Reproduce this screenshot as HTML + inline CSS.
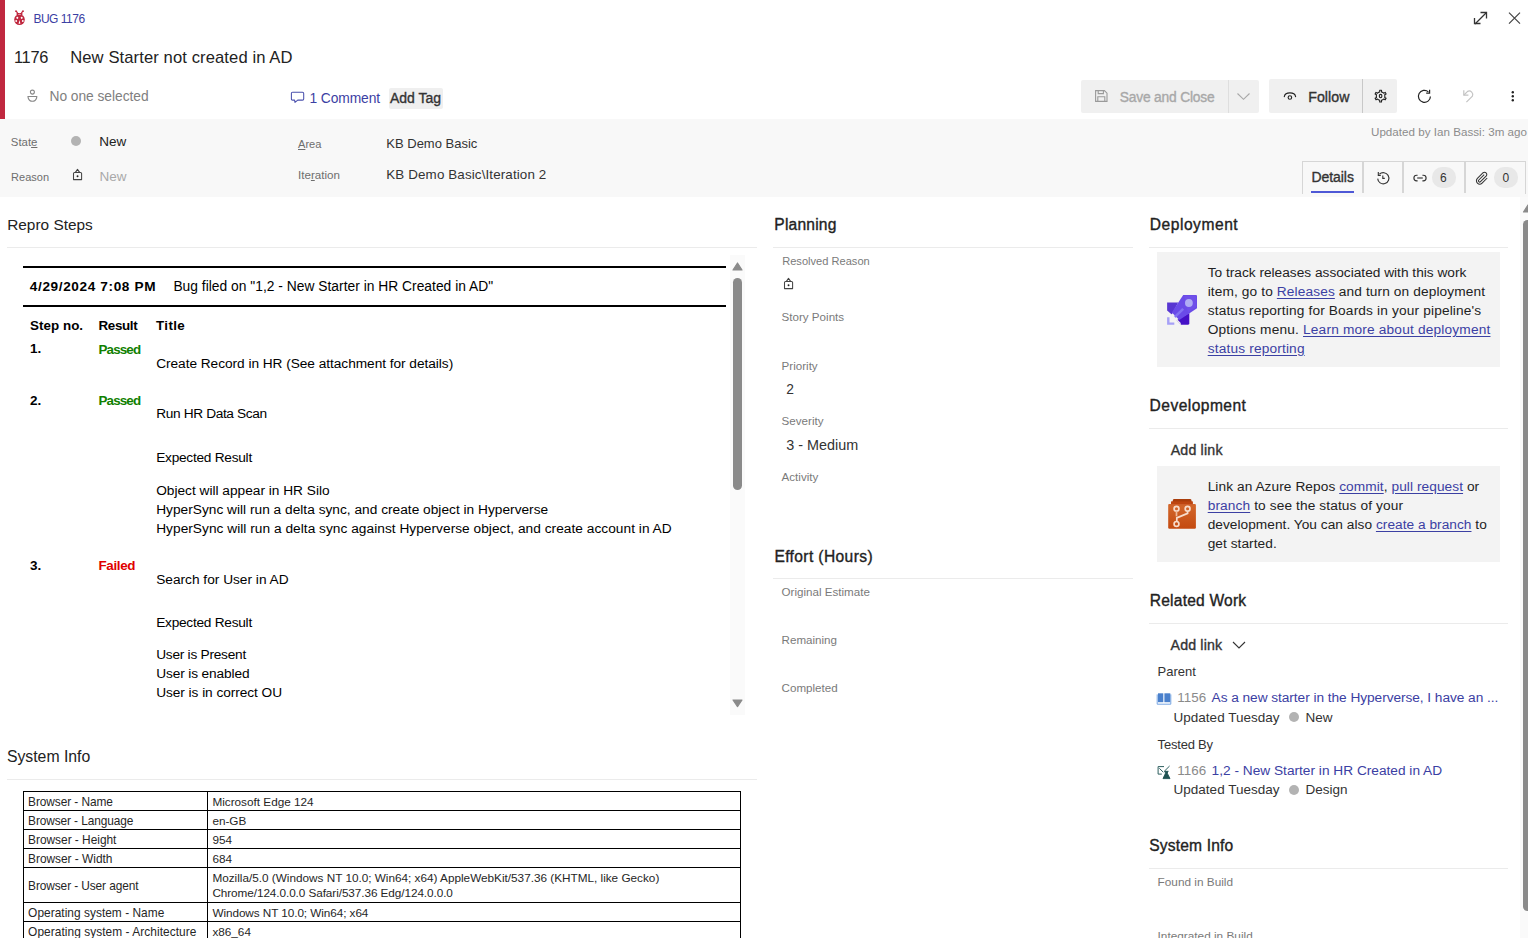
<!DOCTYPE html>
<html><head><meta charset="utf-8"><title>Bug 1176</title>
<style>
html,body{margin:0;padding:0;width:1528px;height:938px;overflow:hidden;background:#fff;}
body{position:relative;font-family:"Liberation Sans", sans-serif;}
.t{position:absolute;white-space:pre;}
.r{position:absolute;display:block;}
u{text-decoration:underline;text-underline-offset:1px;}
</style></head><body>
<div class="r" style="left:0px;top:0px;width:5px;height:119px;background:#c0283f;"></div>
<svg class="r" style="left:13px;top:10px" width="13" height="16" viewBox="0 0 13 16"><g fill="#c0283f">
<path d="M3.2 1.2 L4.6 3.2 M9.8 1.2 L8.4 3.2" stroke="#c0283f" stroke-width="1.2"/>
<circle cx="3" cy="1.2" r="0.9"/><circle cx="10" cy="1.2" r="0.9"/>
<path d="M3.6 3 H9.4 V5 H3.6 Z"/>
<ellipse cx="6.5" cy="9.6" rx="5.3" ry="5.4"/>
</g>
<g fill="#fff"><ellipse cx="4.3" cy="7.8" rx="1" ry="1.1"/><ellipse cx="8.7" cy="7.8" rx="1" ry="1.1"/>
<ellipse cx="3.2" cy="11" rx="0.9" ry="1"/><ellipse cx="9.8" cy="11" rx="0.9" ry="1"/>
<path d="M6.5 10 L7.4 13.8 H5.6 Z"/><path d="M5 4.2 Q6.5 3.4 8 4.2 V4.6 H5 Z"/></g></svg>
<div class="t" style="left:33.4px;top:11.00px;font-size:12px;line-height:16px;color:#3b40a3;letter-spacing:-0.494px;">BUG 1176</div>
<svg class="r" style="left:1472px;top:10px" width="17" height="16" viewBox="0 0 17 16"><g fill="none" stroke="#333" stroke-width="1.3"><path d="M3 14 L14.5 2.5"/><path d="M8.5 2.5 H14.5 V8.5" stroke-width="1.3"/><path d="M2.5 8 V13.5 H8.5"/></g></svg>
<svg class="r" style="left:1507px;top:11px" width="15" height="14" viewBox="0 0 15 14"><g fill="none" stroke="#444" stroke-width="1.2"><path d="M2 1.7 L13 12.7 M13 1.7 L2 12.7"/></g></svg>
<div class="t" style="left:14px;top:46.00px;font-size:16.4px;line-height:22px;color:#222;letter-spacing:-0.317px;">1176</div>
<div class="t" style="left:70.2px;top:46.50px;font-size:16.6px;line-height:22px;color:#222;letter-spacing:0.099px;">New Starter not created in AD</div>
<svg class="r" style="left:26px;top:89px" width="13" height="14" viewBox="0 0 13 14"><g fill="none" stroke="#888" stroke-width="1.1"><circle cx="6.4" cy="3.1" r="2.0"/><path d="M1.9 7.5 H10.9 L10.6 9 Q9.6 12.3 6.4 12.3 Q3.2 12.3 2.2 9 Z" stroke-linejoin="round"/></g></svg>
<div class="t" style="left:49.5px;top:87.50px;font-size:13.8px;line-height:18px;color:#808080;letter-spacing:-0.044px;">No one selected</div>
<svg class="r" style="left:290px;top:91px" width="15" height="13" viewBox="0 0 15 13"><path d="M2.6 1.2 H12.5 Q13.7 1.2 13.7 2.4 V7.9 Q13.7 9.1 12.5 9.1 H7.7 L5 11.4 L4.6 9.1 H2.6 Q1.4 9.1 1.4 7.9 V2.4 Q1.4 1.2 2.6 1.2 Z" fill="none" stroke="#4a50ad" stroke-width="1.05" stroke-linejoin="round"/></svg>
<div class="t" style="left:309.4px;top:89.50px;font-size:13.8px;line-height:18px;color:#3b40a3;letter-spacing:-0.077px;">1 Comment</div>
<div class="r" style="left:389px;top:88px;width:54px;height:21px;background:#efefef;border-radius:2px"></div>
<div class="t" style="left:390px;top:89.00px;font-size:14px;line-height:19px;color:#333;-webkit-text-stroke:0.35px #333;letter-spacing:-0.021px;">Add Tag</div>
<div class="r" style="left:1081px;top:80px;width:178px;height:33px;background:#f0f0f0;border-radius:2px"></div>
<div class="r" style="left:1228px;top:80px;width:1px;height:33px;background:#dedede;"></div>
<svg class="r" style="left:1094px;top:89px" width="15" height="14" viewBox="0 0 15 14"><g fill="none" stroke="#9a9a9a" stroke-width="1.1"><path d="M1.6 1.6 H10.4 L13 4.2 V12.4 H1.6 Z"/><path d="M4.2 1.6 V4.6 H9.4 V1.6"/><path d="M3.8 12.4 V7.8 H10.8 V12.4"/></g></svg>
<div class="t" style="left:1119.7px;top:88.50px;font-size:13.8px;line-height:18px;color:#a8a8a8;-webkit-text-stroke:0.35px #a8a8a8;letter-spacing:-0.186px;">Save and Close</div>
<svg class="r" style="left:1236px;top:92px" width="15" height="9" viewBox="0 0 15 9"><path d="M1.5 1.5 L7.5 7.3 L13.5 1.5" fill="none" stroke="#a8a8a8" stroke-width="1.1"/></svg>
<div class="r" style="left:1269px;top:79px;width:128px;height:34px;background:#f0f0f0;border-radius:2px"></div>
<div class="r" style="left:1362px;top:79px;width:1px;height:34px;background:#c8c8c8;"></div>
<svg class="r" style="left:1282px;top:90px" width="16" height="12" viewBox="0 0 16 12"><g fill="none" stroke="#222" stroke-width="1.15"><path d="M2.3 6.6 A5.7 4.3 0 0 1 13.6 6.6" stroke-linecap="round"/><circle cx="7.9" cy="7.5" r="1.75"/></g></svg>
<div class="t" style="left:1308.2px;top:87.80px;font-size:14.2px;line-height:19px;color:#333;-webkit-text-stroke:0.35px #333;letter-spacing:0.060px;">Follow</div>
<svg class="r" style="left:1373px;top:89px" width="15" height="15" viewBox="0 0 15 15"><g fill="none" stroke="#222" stroke-width="1.1" stroke-linejoin="round"><path d="M5.45 3.38 L6.71 2.89 L6.68 1.27 L8.52 1.27 L8.49 2.89 L9.75 3.38 L10.80 4.22 L12.19 3.39 L13.11 4.99 L11.69 5.77 L11.90 7.10 L11.69 8.43 L13.11 9.21 L12.19 10.81 L10.80 9.98 L9.75 10.82 L8.49 11.31 L8.52 12.93 L6.68 12.93 L6.71 11.31 L5.45 10.82 L4.40 9.98 L3.01 10.81 L2.09 9.21 L3.51 8.43 L3.30 7.10 L3.51 5.77 L2.09 4.99 L3.01 3.39 L4.40 4.22 Z"/><ellipse cx="7.6" cy="7.1" rx="1.3" ry="1.7"/></g></svg>
<svg class="r" style="left:1417.3px;top:89.2px" width="16" height="15" viewBox="0 0 16 15"><g fill="none" stroke="#222" stroke-width="1.2"><path d="M13.4 7.4 A6 6 0 1 1 11.4 2.9"/><path d="M12.6 0.8 V4.1 H9.2"/></g></svg>
<svg class="r" style="left:1461px;top:89px" width="16" height="15" viewBox="0 0 16 15"><g fill="none" stroke="#c4c4c4" stroke-width="1.2"><path d="M2.8 1.2 V6.2 H7.4"/><path d="M3 6 L6.6 2.4 A3.6 3.6 0 0 1 11.4 7.2 L5.4 13.2"/></g></svg>
<svg class="r" style="left:1509px;top:89px" width="8" height="15" viewBox="0 0 8 15"><g fill="#222"><circle cx="3.8" cy="3.3" r="1.2"/><circle cx="3.8" cy="7.3" r="1.2"/><circle cx="3.8" cy="11.3" r="1.2"/></g></svg>
<div class="r" style="left:0px;top:119px;width:1528px;height:78px;background:#f8f8f8;"></div>
<div class="t" style="left:10.8px;top:134.50px;font-size:11.4px;line-height:15px;color:#6e6e6e;">Stat<u>e</u></div>
<svg class="r" style="left:70px;top:135px" width="12" height="12" viewBox="0 0 12 12"><circle cx="6" cy="6" r="5" fill="#b3b3b3"/></svg>
<div class="t" style="left:99.3px;top:132.50px;font-size:13.5px;line-height:18px;color:#222;">New</div>
<div class="t" style="left:11.1px;top:169.50px;font-size:11px;line-height:15px;color:#6e6e6e;">Reason</div>
<svg class="r" style="left:71px;top:168px" width="13" height="13" viewBox="0 0 13 13"><g fill="none" stroke="#444" stroke-width="1.05" stroke-linejoin="round"><path d="M2.5 11.6 V5.6 Q2.5 4.5 3.6 4.5 H9.5 Q10.6 4.5 10.6 5.6 V11.6 Z"/><path d="M4.4 4.4 L6.5 1.4 L8.6 4.4"/></g><circle cx="6.55" cy="8.3" r="0.95" fill="#222"/></svg>
<div class="t" style="left:99.6px;top:167.50px;font-size:13.5px;line-height:18px;color:#a9a9a9;">New</div>
<div class="t" style="left:298px;top:136.80px;font-size:11.1px;line-height:15px;color:#6e6e6e;"><u>A</u>rea</div>
<div class="t" style="left:386.3px;top:135.30px;font-size:13px;line-height:17px;color:#333;">KB Demo Basic</div>
<div class="t" style="left:298px;top:167.00px;font-size:11.6px;line-height:16px;color:#6e6e6e;">Ite<u>r</u>ation</div>
<div class="t" style="left:386.3px;top:165.50px;font-size:13.4px;line-height:18px;color:#333;letter-spacing:0.123px;">KB Demo Basic\Iteration 2</div>
<div class="t" style="left:1371px;top:124.30px;font-size:11.6px;line-height:16px;color:#8c8c8c;letter-spacing:0.025px;">Updated by Ian Bassi: 3m ago</div>
<div class="r" style="left:1302px;top:161px;width:222px;height:32px;border:1.5px solid #d6d6d6;border-bottom:none"></div>
<div class="r" style="left:1362px;top:161px;width:2px;height:32px;background:#d6d6d6;"></div>
<div class="r" style="left:1402px;top:161px;width:2px;height:32px;background:#d6d6d6;"></div>
<div class="r" style="left:1464px;top:161px;width:2px;height:32px;background:#d6d6d6;"></div>
<div class="t" style="left:1311.5px;top:168.40px;font-size:14px;line-height:19px;color:#333;-webkit-text-stroke:0.35px #333;letter-spacing:-0.066px;">Details</div>
<div class="r" style="left:1311px;top:191px;width:43px;height:2px;background:#4e58d6;"></div>
<svg class="r" style="left:1375px;top:170px" width="16" height="16" viewBox="0 0 16 16"><g fill="none" stroke="#333" stroke-width="1.1"><path d="M2.7 8.6 A5.6 5.6 0 1 0 4.4 4.2"/><path d="M3.3 2.1 V5.4 H5.8"/><path d="M7.8 5.4 V8.4 H9.8"/></g></svg>
<svg class="r" style="left:1412px;top:172px" width="16" height="12" viewBox="0 0 16 12"><g fill="none" stroke="#333" stroke-width="1.15"><path d="M5.6 3.2 H4.7 A2.8 2.8 0 0 0 4.7 8.8 H5.6"/><path d="M10.4 3.2 H11.3 A2.8 2.8 0 0 1 11.3 8.8 H10.4"/><path d="M5.2 6 H10.8"/></g></svg>
<div class="r" style="left:1432px;top:167px;width:24px;height:20.5px;background:#e8e8e8;border-radius:10px"></div>
<div class="t" style="left:1440px;top:170.00px;font-size:12px;line-height:16px;color:#333;">6</div>
<svg class="r" style="left:1475px;top:171px" width="14" height="14" viewBox="0 0 14 14"><path d="M9.2 3.6 L3.8 9 A1.2 1.2 0 0 0 5.5 10.7 L11.3 4.9 A2.3 2.3 0 0 0 8.1 1.7 L2.4 7.4 A3.3 3.3 0 0 0 7.1 12.1 L12.2 7" fill="none" stroke="#333" stroke-width="1.05"/></svg>
<div class="r" style="left:1494px;top:167px;width:24px;height:20.5px;background:#e8e8e8;border-radius:10px"></div>
<div class="t" style="left:1502.5px;top:170.00px;font-size:12px;line-height:16px;color:#333;">0</div>
<div class="t" style="left:7.2px;top:214.30px;font-size:15.4px;line-height:21px;color:#222;">Repro Steps</div>
<div class="r" style="left:7px;top:247px;width:750px;height:1px;background:#ebebeb;"></div>
<div class="r" style="left:23px;top:266px;width:703px;height:2px;background:#000;"></div>
<div class="r" style="left:23px;top:305px;width:703px;height:2px;background:#000;"></div>
<div class="t" style="left:29.8px;top:278.30px;font-size:13.6px;line-height:18px;color:#000;font-weight:700;letter-spacing:0.629px;">4/29/2024 7:08 PM</div>
<div class="t" style="left:173.4px;top:278.30px;font-size:13.8px;line-height:18px;color:#000;letter-spacing:0.017px;">Bug filed on "1,2 - New Starter in HR Created in AD"</div>
<div class="t" style="left:29.9px;top:317.30px;font-size:13.4px;line-height:18px;color:#000;font-weight:700;letter-spacing:0.053px;">Step no.</div>
<div class="t" style="left:98.5px;top:317.30px;font-size:13.4px;line-height:18px;color:#000;font-weight:700;letter-spacing:-0.347px;">Result</div>
<div class="t" style="left:156.1px;top:317.30px;font-size:13.4px;line-height:18px;color:#000;font-weight:700;letter-spacing:0.326px;">Title</div>
<div class="t" style="left:29.9px;top:340.30px;font-size:13.5px;line-height:18px;color:#000;font-weight:700;">1.</div>
<div class="t" style="left:98.5px;top:340.90px;font-size:13.4px;line-height:18px;color:#108000;font-weight:700;letter-spacing:-0.861px;">Passed</div>
<div class="t" style="left:156.2px;top:354.50px;font-size:13.7px;line-height:18px;color:#000;letter-spacing:-0.042px;">Create Record in HR (See attachment for details)</div>
<div class="t" style="left:29.9px;top:391.50px;font-size:13.5px;line-height:18px;color:#000;font-weight:700;">2.</div>
<div class="t" style="left:98.5px;top:391.90px;font-size:13.4px;line-height:18px;color:#108000;font-weight:700;letter-spacing:-0.861px;">Passed</div>
<div class="t" style="left:156.2px;top:405.20px;font-size:13.7px;line-height:18px;color:#000;letter-spacing:-0.360px;">Run HR Data Scan</div>
<div class="t" style="left:156.2px;top:448.80px;font-size:13.7px;line-height:18px;color:#000;letter-spacing:-0.262px;">Expected Result</div>
<div class="t" style="left:156.2px;top:481.50px;font-size:13.7px;line-height:18px;color:#000;">Object will appear in HR Silo</div>
<div class="t" style="left:156.2px;top:500.50px;font-size:13.7px;line-height:18px;color:#000;letter-spacing:0.015px;">HyperSync will run a delta sync, and create object in Hyperverse</div>
<div class="t" style="left:156.2px;top:519.50px;font-size:13.7px;line-height:18px;color:#000;letter-spacing:0.033px;">HyperSync will run a delta sync against Hyperverse object, and create account in AD</div>
<div class="t" style="left:29.9px;top:556.50px;font-size:13.5px;line-height:18px;color:#000;font-weight:700;">3.</div>
<div class="t" style="left:98.5px;top:556.50px;font-size:13.4px;line-height:18px;color:#e00000;font-weight:700;letter-spacing:-0.341px;">Failed</div>
<div class="t" style="left:156.2px;top:570.70px;font-size:13.7px;line-height:18px;color:#000;">Search for User in AD</div>
<div class="t" style="left:156.2px;top:613.80px;font-size:13.7px;line-height:18px;color:#000;letter-spacing:-0.262px;">Expected Result</div>
<div class="t" style="left:156.2px;top:646.30px;font-size:13.7px;line-height:18px;color:#000;letter-spacing:-0.254px;">User is Present</div>
<div class="t" style="left:156.2px;top:665.30px;font-size:13.7px;line-height:18px;color:#000;letter-spacing:-0.122px;">User is enabled</div>
<div class="t" style="left:156.2px;top:684.40px;font-size:13.7px;line-height:18px;color:#000;letter-spacing:-0.056px;">User is in correct OU</div>
<div class="r" style="left:730px;top:255px;width:15px;height:460px;background:#fafafa;"></div>
<svg class="r" style="left:731px;top:261px" width="13" height="11" viewBox="0 0 13 11"><path d="M6.5 2 L11 9 H2 Z" fill="#8a8a8a" stroke="#8a8a8a" stroke-width="1.2" stroke-linejoin="round"/></svg>
<div class="r" style="left:733px;top:277.5px;width:9px;height:212.0px;background:#8a8a8a;border-radius:4.5px"></div>
<svg class="r" style="left:731px;top:698px" width="13" height="11" viewBox="0 0 13 11"><path d="M2 2 H11 L6.5 8.6 Z" fill="#8a8a8a" stroke="#8a8a8a" stroke-width="1.2" stroke-linejoin="round"/></svg>
<div class="t" style="left:6.9px;top:746.00px;font-size:15.8px;line-height:21px;color:#222;">System Info</div>
<div class="r" style="left:7px;top:779px;width:750px;height:1px;background:#ebebeb;"></div>
<div class="r" style="left:23px;top:791px;width:1px;height:147px;background:#000;"></div>
<div class="r" style="left:740px;top:791px;width:1px;height:147px;background:#000;"></div>
<div class="r" style="left:207px;top:791px;width:1px;height:147px;background:#000;"></div>
<div class="r" style="left:23px;top:791px;width:718px;height:1px;background:#000;"></div>
<div class="t" style="left:28.1px;top:794.00px;font-size:11.9px;line-height:16px;color:#262626;letter-spacing:-0.085px;">Browser - Name</div>
<div class="t" style="left:212.4px;top:793.50px;font-size:11.75px;line-height:16px;color:#262626;">Microsoft Edge 124</div>
<div class="r" style="left:23px;top:810px;width:718px;height:1px;background:#000;"></div>
<div class="t" style="left:28.1px;top:813.00px;font-size:11.9px;line-height:16px;color:#262626;letter-spacing:-0.111px;">Browser - Language</div>
<div class="t" style="left:212.4px;top:812.50px;font-size:11.75px;line-height:16px;color:#262626;">en-GB</div>
<div class="r" style="left:23px;top:829px;width:718px;height:1px;background:#000;"></div>
<div class="t" style="left:28.1px;top:832.00px;font-size:11.9px;line-height:16px;color:#262626;letter-spacing:-0.018px;">Browser - Height</div>
<div class="t" style="left:212.4px;top:831.50px;font-size:11.75px;line-height:16px;color:#262626;">954</div>
<div class="r" style="left:23px;top:848px;width:718px;height:1px;background:#000;"></div>
<div class="t" style="left:28.1px;top:851.00px;font-size:11.9px;line-height:16px;color:#262626;letter-spacing:-0.020px;">Browser - Width</div>
<div class="t" style="left:212.4px;top:850.50px;font-size:11.75px;line-height:16px;color:#262626;">684</div>
<div class="r" style="left:23px;top:867px;width:718px;height:1px;background:#000;"></div>
<div class="t" style="left:28.1px;top:878.00px;font-size:11.9px;line-height:16px;color:#262626;letter-spacing:-0.102px;">Browser - User agent</div>
<div class="t" style="left:212.4px;top:869.70px;font-size:11.75px;line-height:16px;color:#262626;">Mozilla/5.0 (Windows NT 10.0; Win64; x64) AppleWebKit/537.36 (KHTML, like Gecko)</div>
<div class="t" style="left:212.4px;top:885.30px;font-size:11.75px;line-height:16px;color:#262626;letter-spacing:-0.074px;">Chrome/124.0.0.0 Safari/537.36 Edg/124.0.0.0</div>
<div class="r" style="left:23px;top:902px;width:718px;height:1px;background:#000;"></div>
<div class="t" style="left:28.1px;top:905.00px;font-size:11.9px;line-height:16px;color:#262626;letter-spacing:0.033px;">Operating system - Name</div>
<div class="t" style="left:212.4px;top:904.50px;font-size:11.75px;line-height:16px;color:#262626;letter-spacing:-0.070px;">Windows NT 10.0; Win64; x64</div>
<div class="r" style="left:23px;top:921px;width:718px;height:1px;background:#000;"></div>
<div class="t" style="left:28.1px;top:924.00px;font-size:11.9px;line-height:16px;color:#262626;letter-spacing:0.058px;">Operating system - Architecture</div>
<div class="t" style="left:212.4px;top:923.50px;font-size:11.75px;line-height:16px;color:#262626;">x86_64</div>
<div class="t" style="left:774.3px;top:214.00px;font-size:15.6px;line-height:21px;color:#222;-webkit-text-stroke:0.35px #222;letter-spacing:0.200px;">Planning</div>
<div class="r" style="left:773px;top:247px;width:360px;height:1px;background:#ebebeb;"></div>
<div class="t" style="left:782.2px;top:253.70px;font-size:11.1px;line-height:15px;color:#7a7a7a;">Resolved Reason</div>
<svg class="r" style="left:781.6px;top:277.3px" width="13" height="13" viewBox="0 0 13 13"><g fill="none" stroke="#444" stroke-width="1.05" stroke-linejoin="round"><path d="M2.5 11.6 V5.6 Q2.5 4.5 3.6 4.5 H9.5 Q10.6 4.5 10.6 5.6 V11.6 Z"/><path d="M4.4 4.4 L6.5 1.4 L8.6 4.4"/></g><circle cx="6.55" cy="8.3" r="0.95" fill="#222"/></svg>
<div class="t" style="left:781.6px;top:309.10px;font-size:11.6px;line-height:16px;color:#7a7a7a;">Story Points</div>
<div class="t" style="left:781.6px;top:357.50px;font-size:11.6px;line-height:16px;color:#7a7a7a;">Priority</div>
<div class="t" style="left:786.3px;top:380.50px;font-size:13.8px;line-height:18px;color:#333;">2</div>
<div class="t" style="left:781.6px;top:413.00px;font-size:11.6px;line-height:16px;color:#7a7a7a;">Severity</div>
<div class="t" style="left:786.3px;top:435.50px;font-size:14.4px;line-height:19px;color:#333;">3 - Medium</div>
<div class="t" style="left:781.6px;top:469.40px;font-size:11.6px;line-height:16px;color:#7a7a7a;">Activity</div>
<div class="t" style="left:774.4px;top:545.60px;font-size:15.6px;line-height:21px;color:#222;-webkit-text-stroke:0.35px #222;letter-spacing:0.377px;">Effort (Hours)</div>
<div class="r" style="left:773px;top:578px;width:360px;height:1px;background:#ebebeb;"></div>
<div class="t" style="left:781.6px;top:584.20px;font-size:11.6px;line-height:16px;color:#7a7a7a;">Original Estimate</div>
<div class="t" style="left:781.6px;top:632.20px;font-size:11.6px;line-height:16px;color:#7a7a7a;">Remaining</div>
<div class="t" style="left:781.6px;top:680.20px;font-size:11.6px;line-height:16px;color:#7a7a7a;">Completed</div>
<div class="t" style="left:1149.7px;top:214.30px;font-size:15.6px;line-height:21px;color:#222;-webkit-text-stroke:0.35px #222;letter-spacing:0.531px;">Deployment</div>
<div class="r" style="left:1149px;top:247px;width:359px;height:1px;background:#ebebeb;"></div>
<div class="r" style="left:1157px;top:252px;width:343px;height:115px;background:#f3f3f3;"></div>
<svg class="r" style="left:1162px;top:290px" width="40" height="40" viewBox="0 0 40 40"><path d="M5.1 12.6 H16.2 L9.8 24.5 L5.1 20.5 Z" fill="#5836d2"/>
<path d="M27.3 23 V33.9 L26.2 34.8 H19.2 L14.6 30.2 Z" fill="#4510c6"/>
<path d="M21.2 5.1 H34 Q35 5.1 35 6.1 V18.3 L17.3 30 L9.8 22.4 Z" fill="#6a4be8"/>
<path d="M22 6 L33.8 5.6 L34.6 17 L26 22.6 Z" fill="#7456ea" opacity="0.5"/>
<circle cx="26.9" cy="13" r="3.9" fill="#b0adf4"/>
<path d="M21.2 18.9 L12.4 27.4" stroke="#8272f1" stroke-width="2.6"/>
<path d="M9.6 24.4 L18.6 33.6" stroke="#f3f3f3" stroke-width="1.1"/>
<path d="M6.3 27.3 V33.6 H12.3" fill="none" stroke="#a6a0f7" stroke-width="2.4"/></svg>
<div class="t" style="left:1207.7px;top:263.70px;font-size:13.7px;line-height:18px;color:#222;">To track releases associated with this work</div>
<div class="t" style="left:1207.7px;top:282.70px;font-size:13.7px;line-height:18px;color:#222;letter-spacing:0.119px;">item, go to <span style="color:#3b40a3;text-decoration:underline;text-underline-offset:2px;">Releases</span> and turn on deployment</div>
<div class="t" style="left:1207.7px;top:301.70px;font-size:13.7px;line-height:18px;color:#222;letter-spacing:0.153px;">status reporting for Boards in your pipeline's</div>
<div class="t" style="left:1207.7px;top:320.70px;font-size:13.7px;line-height:18px;color:#222;letter-spacing:0.179px;">Options menu. <span style="color:#3b40a3;text-decoration:underline;text-underline-offset:2px;">Learn more about deployment</span></div>
<div class="t" style="left:1207.7px;top:339.70px;font-size:13.7px;line-height:18px;color:#222;letter-spacing:0.164px;"><span style="color:#3b40a3;text-decoration:underline;text-underline-offset:2px;">status reporting</span></div>
<div class="t" style="left:1149.6px;top:395.00px;font-size:15.6px;line-height:21px;color:#222;-webkit-text-stroke:0.35px #222;letter-spacing:0.441px;">Development</div>
<div class="r" style="left:1149px;top:428px;width:359px;height:1px;background:#ebebeb;"></div>
<div class="t" style="left:1170.7px;top:440.50px;font-size:14.2px;line-height:19px;color:#333;-webkit-text-stroke:0.35px #333;letter-spacing:0.188px;">Add link</div>
<div class="r" style="left:1157px;top:466px;width:343px;height:96px;background:#f3f3f3;"></div>
<svg class="r" style="left:1162px;top:494px" width="40" height="40" viewBox="0 0 40 40"><defs><linearGradient id="gg" x1="0" y1="0" x2="0" y2="1"><stop offset="0" stop-color="#d3682c"/><stop offset="1" stop-color="#c44a10"/></linearGradient></defs>
<path d="M12 4.9 H28.2 Q29 4.9 29.3 5.8 L29.8 8 H10.4 L11 5.8 Q11.3 4.9 12 4.9 Z" fill="#a93d0b"/>
<rect x="9" y="7.4" width="21.9" height="3" fill="#bd4510"/>
<path d="M6.2 11 Q6.2 10 7.2 10 H32.9 Q33.9 10 33.9 11 V33.6 Q33.9 34.8 32.7 34.8 H7.4 Q6.2 34.8 6.2 33.6 Z" fill="url(#gg)"/>
<rect x="9" y="10" width="21.9" height="1.2" fill="#c9582a" opacity="0.6"/>
<g fill="none" stroke="#f7dccb" stroke-width="1.7"><circle cx="14.5" cy="14.7" r="2.4"/><circle cx="25.6" cy="14.7" r="2.4"/><circle cx="14.5" cy="29.9" r="2.4"/><path d="M25.6 17.1 V19.4 L14.8 23.9 V27.5"/></g>
<path d="M14.5 17.1 V22.4" stroke="#eeb999" stroke-width="1.7"/></svg>
<div class="t" style="left:1207.7px;top:477.50px;font-size:13.7px;line-height:18px;color:#222;letter-spacing:0.069px;">Link an Azure Repos <span style="color:#3b40a3;text-decoration:underline;text-underline-offset:2px;">commit</span>, <span style="color:#3b40a3;text-decoration:underline;text-underline-offset:2px;">pull request</span> or</div>
<div class="t" style="left:1207.7px;top:496.50px;font-size:13.7px;line-height:18px;color:#222;letter-spacing:0.115px;"><span style="color:#3b40a3;text-decoration:underline;text-underline-offset:2px;">branch</span> to see the status of your</div>
<div class="t" style="left:1207.7px;top:515.50px;font-size:13.7px;line-height:18px;color:#222;letter-spacing:0.031px;">development. You can also <span style="color:#3b40a3;text-decoration:underline;text-underline-offset:2px;">create a branch</span> to</div>
<div class="t" style="left:1207.7px;top:534.50px;font-size:13.7px;line-height:18px;color:#222;letter-spacing:0.047px;">get started.</div>
<div class="t" style="left:1149.8px;top:590.00px;font-size:15.6px;line-height:21px;color:#222;-webkit-text-stroke:0.35px #222;letter-spacing:0.192px;">Related Work</div>
<div class="r" style="left:1149px;top:623px;width:359px;height:1px;background:#ebebeb;"></div>
<div class="t" style="left:1170.6px;top:635.70px;font-size:14.2px;line-height:19px;color:#333;-webkit-text-stroke:0.35px #333;letter-spacing:0.145px;">Add link</div>
<svg class="r" style="left:1231px;top:640px" width="16" height="10" viewBox="0 0 16 10"><path d="M2 2 L8 8 L14 2" fill="none" stroke="#333" stroke-width="1.1"/></svg>
<div class="t" style="left:1157.6px;top:662.80px;font-size:13px;line-height:17px;color:#333;">Parent</div>
<svg class="r" style="left:1156px;top:692px" width="16" height="14" viewBox="0 0 16 14"><g fill="#4a80cc"><rect x="2" y="1.3" width="5.3" height="8.9"/><rect x="8.4" y="1.3" width="5.9" height="8.9"/></g><path d="M1.2 2.4 V12.2 H14.8 V2.4" fill="none" stroke="#76a4e2" stroke-width="1"/></svg>
<div class="t" style="left:1177.3px;top:689.20px;font-size:13.4px;line-height:18px;color:#8a8a8a;">1156</div>
<div class="t" style="left:1211.6px;top:689.20px;font-size:13.7px;line-height:18px;color:#3b40a3;letter-spacing:-0.050px;">As a new starter in the Hyperverse, I have an ...</div>
<div class="t" style="left:1173.6px;top:708.50px;font-size:13.5px;line-height:18px;color:#333;">Updated Tuesday</div>
<svg class="r" style="left:1288px;top:711px" width="12" height="12" viewBox="0 0 12 12"><circle cx="6" cy="6" r="5" fill="#b3b3b3"/></svg>
<div class="t" style="left:1305.4px;top:708.50px;font-size:13.5px;line-height:18px;color:#333;">New</div>
<div class="t" style="left:1157.6px;top:736.30px;font-size:13px;line-height:17px;color:#333;letter-spacing:-0.200px;">Tested By</div>
<svg class="r" style="left:1156px;top:765px" width="16" height="15" viewBox="0 0 16 15"><g fill="none" stroke="#2e5f5f" stroke-width="1"><path d="M8 1.6 H2.1 V9.1 H5.8"/><path d="M3.3 3.3 L7.3 7.2"/><path d="M13.6 1 L8.4 6.2"/></g>
<path d="M8.1 6.3 H12.6 M9.3 6.3 V8.7 L7 13.6 H14 L11.5 8.7 V6.3" fill="#1f5252" stroke="#1f5252" stroke-width="0.9" stroke-linejoin="round"/></svg>
<div class="t" style="left:1177.3px;top:762.00px;font-size:13.4px;line-height:18px;color:#8a8a8a;">1166</div>
<div class="t" style="left:1211.6px;top:762.00px;font-size:13.7px;line-height:18px;color:#3b40a3;">1,2 - New Starter in HR Created in AD</div>
<div class="t" style="left:1173.6px;top:781.20px;font-size:13.5px;line-height:18px;color:#333;">Updated Tuesday</div>
<svg class="r" style="left:1288px;top:784px" width="12" height="12" viewBox="0 0 12 12"><circle cx="6" cy="6" r="5" fill="#b3b3b3"/></svg>
<div class="t" style="left:1305.4px;top:781.20px;font-size:13.5px;line-height:18px;color:#333;">Design</div>
<div class="t" style="left:1149.2px;top:835.40px;font-size:15.6px;line-height:21px;color:#222;-webkit-text-stroke:0.35px #222;letter-spacing:0.166px;">System Info</div>
<div class="r" style="left:1149px;top:868px;width:359px;height:1px;background:#ebebeb;"></div>
<div class="t" style="left:1157.6px;top:874.30px;font-size:11.8px;line-height:16px;color:#7a7a7a;">Found in Build</div>
<div class="t" style="left:1157.6px;top:928.30px;font-size:11.8px;line-height:16px;color:#7a7a7a;">Integrated in Build</div>
<div class="r" style="left:1520px;top:197px;width:8px;height:741px;background:#fafafa;"></div>
<svg class="r" style="left:1521px;top:203px" width="14" height="11" viewBox="0 0 14 11"><path d="M7 2 L11.5 9 H2.5 Z" fill="#8a8a8a" stroke="#8a8a8a" stroke-width="1.2" stroke-linejoin="round"/></svg>
<div class="r" style="left:1523px;top:220px;width:9px;height:690.5px;background:#8a8a8a;border-radius:4.5px"></div>
</body></html>
